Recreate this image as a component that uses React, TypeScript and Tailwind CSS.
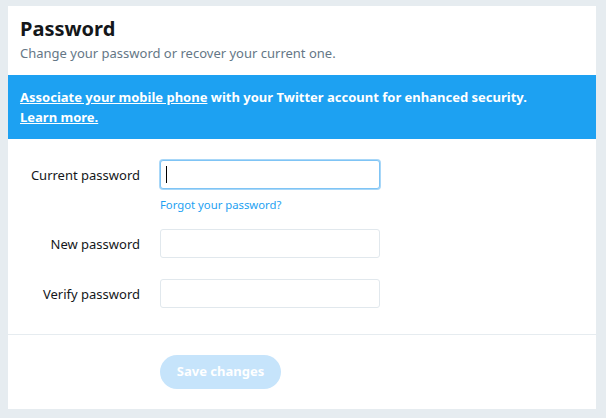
const FONT = { fontFamily: '"Noto Sans", "Open Sans", Arial, sans-serif' }

function Field({ label, focused }: { label: string; focused?: boolean }) {
  return (
    <div className="flex items-center">
      <label className="w-[132px] shrink-0 text-right text-[13px] leading-[18px] text-[#14171a]">{label}</label>
      <div
        className={`relative ml-[20px] h-[29px] w-[220px] rounded-[3px] border bg-white ${
          focused ? 'border-[#7fc4f5] shadow-[0_0_0_1px_#a8d7f8]' : 'border-[#e1e8ed]'
        }`}
      >
        {focused ? <span className="absolute left-[5px] top-[5px] h-[17px] w-px bg-black" /> : null}
      </div>
    </div>
  )
}

export default function App() {
  return (
    <div className="min-h-[418px] bg-[#e6ecf0] px-[8px] pt-[6px]" style={FONT}>
      <div className="w-[588px] bg-white pb-[20px]">
        <div className="px-[12px] pt-[9px] pb-[12px]">
          <h1 className="text-[20px] font-bold leading-[28px] text-[#14171a]">Password</h1>
          <p className="text-[13px] leading-[20px] text-[#657786]">Change your password or recover your current one.</p>
        </div>
        <div className="bg-[#1da1f2] px-[12px] py-[12px] text-[13px] font-bold leading-[20px] text-white">
          <a href="#" className="underline">Associate your mobile phone</a> with your Twitter account for enhanced security.
          <br />
          <a href="#" className="underline">Learn more.</a>
        </div>
        <div className="border-b border-[#e6ecf0] pt-[21px] pb-[26px]">
          <Field label="Current password" focused />
          <a href="#" className="ml-[152px] mt-[8px] block text-[11.3px] leading-[16px] text-[#1da1f2]">
            Forgot your password?
          </a>
          <div className="mt-[16px] flex flex-col gap-[21px]">
            <Field label="New password" />
            <Field label="Verify password" />
          </div>
        </div>
        <div className="pl-[152px] pt-[20px]">
          <button
            type="button"
            disabled
            className="h-[34px] w-[121px] rounded-full bg-[#c6e4fb] text-[13px] font-bold text-white"
          >
            Save changes
          </button>
        </div>
      </div>
    </div>
  )
}
